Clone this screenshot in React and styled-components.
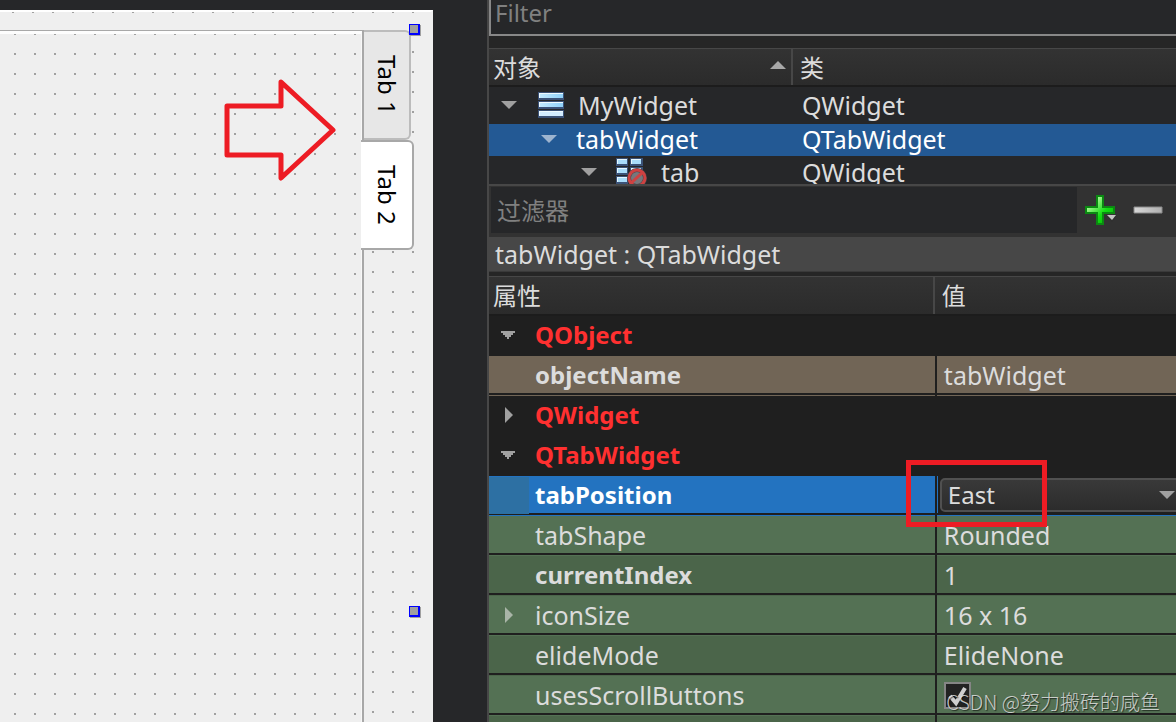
import { useState } from "react";
import styled, { createGlobalStyle } from "styled-components";

const GlobalStyle = createGlobalStyle`
  * {
    box-sizing: border-box;
  }

  body {
    margin: 0;
    background-color: #262729;
    color: #dcdcdc;
    font-family: "Noto Sans", "Noto Sans CJK SC", sans-serif;
    font-size: 24px;
    line-height: 32px;
  }

  button, input, select {
    font: inherit;
    color: inherit;
  }
`;

const Designer = styled.main`
  display: grid;
  grid-template-columns: minmax(0, 487fr) minmax(0, 689fr);
  height: 100vh;
  overflow: hidden;
`;

/* ---------- form editor ---------- */

const dots = (x, y) => `
  background-color: #efefef;
  background-image: conic-gradient(at 2px 2px, transparent 75%, #a0a0a0 0);
  background-size: 20px 20px;
  background-position: ${x}px ${y}px;
`;

const FormArea = styled.section`
  display: flex;
  padding: 10px 54px 0 0;
`;

const Form = styled.div`
  ${dots(12, 19)}
  background-clip: padding-box;
  position: relative;
  flex: 1;
  display: flex;
  padding-top: 18px;
  border-top: 2px solid #fff;
  border-right: 2px solid #efefef;
`;

const TabPage = styled.div`
  ${dots(14, 19)}
  flex: 1;
  border-top: 3px solid #fdfdfd;
  border-right: 1px solid #f8f8f8;
  box-shadow: 0 -1px 0 #a8a8a8;
  margin-top: 1px;
`;

const TabBar = styled.div`
  display: flex;
  flex-direction: column;
  align-items: flex-start;
  width: 51px;
  margin-right: 18px;
  border-left: 2px solid #a8a8a8;
`;

const Tab = styled.button`
  writing-mode: vertical-rl;
  width: ${(p) => (p.$current ? 53 : 47)}px;
  height: 110px;
  margin-left: ${(p) => (p.$current ? -3 : 0)}px;
  padding: 0;
  border: 2px solid ${(p) => (p.$current ? "#a8a8a8" : "#bcbcbc")};
  border-left: 0;
  border-radius: 0 6px 6px 0;
  background-color: ${(p) => (p.$current ? "#fff" : "#e7e7e7")};
  color: #000;
  text-align: center;
`;

const Handle = styled.span`
  position: absolute;
  top: ${(p) => p.$top};
  right: 11px;
  width: 11px;
  height: 11px;
  border: solid #0000ff;
  border-width: 1px 2px 2px 1px;
  background-color: #a0a0a0;
  box-shadow: 1px 1px 0 #a0a0a0;
`;

const ArrowMark = styled.svg`
  position: absolute;
  top: 66px;
  left: 222px;
  width: 116px;
  height: 104px;
`;

/* ---------- side panels ---------- */

const Side = styled.aside`
  display: flex;
  flex-direction: column;
  min-width: 0;
  overflow: hidden;
  border-left: 2px solid #474747;
  background-color: #262626;
`;

const ObjectFilter = styled.input`
  flex: none;
  width: 100%;
  height: 36px;
  padding: 0 4px 10px;
  border: solid #888;
  border-width: 0 0 2px 2px;
  background-color: #262729;
  outline: 0;

  &::placeholder {
    color: #808080;
  }
`;

const Grid = styled.table`
  width: 100%;
  table-layout: fixed;
  border-spacing: 0;
`;

const HeadCell = styled.th`
  height: 39px;
  padding: 2px 4px 0;
  border: solid #1c1c1c;
  border-width: 0 0 2px;
  background-image: linear-gradient(#333, #2b2b2b);
  box-shadow: inset 0 1px 0 #474747, inset -2px 0 0 ${(p) => (p.$last ? "transparent" : "#474747")};
  font-weight: 400;
  line-height: 32px;
  text-align: left;
`;

const HeadInner = styled.div`
  display: flex;
  justify-content: space-between;
  align-items: center;
  padding-right: 3px;
  padding-left: ${(p) => (p.$indent ? 3 : 0)}px;
`;

const TreeView = styled.div`
  flex: none;
  height: 136px;
  margin-top: 12px;
  overflow: hidden;
`;

const TreeRow = styled.tr`
  height: ${(p) => p.$height}px;
  background-color: ${(p) => (p.$selected ? "#235994" : "#262729")};
  color: ${(p) => (p.$selected ? "#fff" : "#dcdcdc")};
`;

const TreeCell = styled.td`
  padding: 0 0 2px ${(p) => p.$indent}px;
  font-size: 25px;
  line-height: 30px;
  white-space: nowrap;
`;

const TreeItem = styled.div`
  display: flex;
  align-items: center;
  height: 30px;

  svg {
    flex: none;
  }
`;

const Expander = styled.button`
  display: flex;
  flex: none;
  align-items: center;
  width: ${(p) => p.$width}px;
  height: 20px;
  padding: 0;
  border: 0;
  background: none;
  color: ${(p) => p.$color || "#a0a0a0"};
`;

const ItemName = styled.span`
  margin-left: ${(p) => (p.$icon ? 13 : 0)}px;
`;

const PropertyToolbar = styled.div`
  display: flex;
  flex: none;
  align-items: center;
  height: 53px;
  padding: 0 13px 3px 2px;
  border-top: 2px solid #474747;
  background-color: #323232;
`;

const PropertyFilter = styled.input`
  flex: 1;
  min-width: 0;
  height: 46px;
  margin-right: 8px;
  padding: 0 6px;
  border: 0;
  background-color: #262729;
  outline: 0;

  &::placeholder {
    color: #808080;
  }
`;

const ToolButton = styled.button`
  display: flex;
  padding: 0;
  border: 0;
  margin-right: ${(p) => p.$gap || 0}px;
  background: none;
`;

const ObjectTitle = styled.div`
  flex: none;
  height: 35px;
  margin-bottom: 4px;
  padding-left: 6px;
  border-bottom: 1px solid #3a3a3a;
  background-color: #474747;
  font-size: 25px;
  line-height: 35px;
`;

const tones = {
  group: "#1f1f1f",
  brown: "#716556",
  blue: "#2373c0",
  light: "#547154",
  dark: "#4b654a",
};

const PropertyTable = styled(Grid)`
  flex: none;

  th {
    height: 40px;
  }
`;

const PropertyRow = styled.tr`
  height: 40px;
  background-color: ${(p) => tones[p.$tone]};
`;

const PropertyCell = styled.td`
  position: relative;
  padding: 0 0 2px ${(p) => (p.$value ? 9 : 0)}px;
  box-shadow: ${(p) => (p.$value ? "inset 2px 0 0 #1f1f1f, " : "")}inset 0 -1px 0 ${(p) => tones[p.$tone]},
    inset 0 -3px 0 #1f1f1f;
  font-size: 25px;
  white-space: nowrap;
`;

const GroupCell = styled.td`
  padding: 0 0 2px;
`;

const PropertyName = styled.div`
  display: flex;
  align-items: center;
  height: 37px;
  padding-left: 11px;
  background-image: ${(p) => (p.$marked ? "linear-gradient(90deg, #2d70a3 40px, transparent 40px)" : "none")};
  color: ${(p) => (p.$group ? "#ff3030" : p.$marked ? "#fff" : "inherit")};
  font-size: ${(p) => (p.$bold ? 24 : 25)}px;
  font-weight: ${(p) => (p.$bold ? 700 : 400)};
`;

const EditorCell = styled(PropertyCell)`
  padding: 0 0 4px 3px;
  background-color: #1f1f1f;
  background-image: linear-gradient(90deg, transparent 2px, #2373c0 2px 3px, transparent 3px);
  font-size: 24px;
`;

const Combo = styled.div`
  display: flex;
  align-items: center;
  height: 34px;
  margin: 2px -6px 0 2px;
  border: 2px solid #505050;
  border-radius: 5px;
  background-image: linear-gradient(#393939, #2c2c2c);

  svg {
    flex: none;
    margin-right: 5px;
    color: #a0a0a0;
  }
`;

const ComboSelect = styled.select`
  flex: 1;
  height: 30px;
  padding: 0 6px;
  border: 0;
  appearance: none;
  background: none;
  line-height: 30px;
  outline: 0;
`;

const RedFrame = styled.span`
  position: absolute;
  z-index: 1;
  top: -16px;
  left: -29px;
  width: 141px;
  height: 67px;
  border: 5px solid #ed1c24;
  pointer-events: none;
`;

const CheckLabel = styled.label`
  display: grid;
  width: 27px;

  > * {
    grid-area: 1 / 1;
  }
`;

const CheckBox = styled.input`
  width: 27px;
  height: 27px;
  margin: 0;
  border: 2px solid #858585;
  appearance: none;
  background-color: #222;
`;

const Watermark = styled.div`
  position: absolute;
  right: 16px;
  bottom: 4px;
  color: rgba(225, 225, 225, 0.85);
  font-family: "Noto Sans CJK SC", sans-serif;
  font-size: 20px;
  font-weight: 300;
  text-shadow: 1px 1px 1px rgba(0, 0, 0, 0.6);
`;

function Triangle({ right, small }) {
  if (right) {
    return (
      <svg width="16" height="16" viewBox="0 0 16 16">
        <path d="M5 0l8 8-8 8z" fill="currentColor" />
      </svg>
    );
  }
  return (
    <svg width="16" height="16" viewBox="0 0 16 16">
      <path d={small ? "M1 4h14v2h-2v2h-2v2H9v2H7v-2H5V8H3V6H1z" : "M0 4h16l-8 8z"} fill="currentColor" />
    </svg>
  );
}

function SortArrow() {
  return (
    <svg width="16" height="16" viewBox="0 0 16 16">
      <path d="M0 9l8-8 8 8z" fill="#a8a8a8" />
    </svg>
  );
}

function LayoutIcon() {
  return (
    <svg width="27" height="27" viewBox="0 0 27 27">
      <defs>
        <linearGradient id="bar" x2="1" y2="0">
          <stop offset="0" stopColor="#c4ebff" />
          <stop offset="1" stopColor="#8fd0f8" />
        </linearGradient>
      </defs>
      {[1, 10, 19].map((y, i) => (
        <g key={y}>
          <path d={`M0 ${y}h26v8H0z`} fill="#3b5277" />
          <path d={`M1 ${y + 1}h24v5H1z`} fill={i === 2 ? "#d3ecff" : "url(#bar)"} />
          <path d={`M1 ${y + 1}h24v1H2v4H1z`} fill="#eefaff" />
        </g>
      ))}
    </svg>
  );
}

function BrokenLayoutIcon() {
  return (
    <svg width="32" height="32" viewBox="0 0 32 32">
      {[2, 11, 20].map((y) => (
        <g key={y}>
          <path d={`M0 ${y}h12v8H0zM14 ${y}h13v8H14z`} fill="#3b5277" />
          <path d={`M1 ${y + 1}h10v5H1zM15 ${y + 1}h10v5H15z`} fill="#a9dcfa" />
          <path d={`M1 ${y + 1}h10v1H2v4H1zM15 ${y + 1}h10v1H16v4h-1z`} fill="#e5f7ff" />
        </g>
      ))}
      <circle cx="21" cy="22" r="8" fill="#77777c" stroke="#4a4448" strokeWidth="4" />
      <circle cx="21" cy="22" r="8" fill="none" stroke="#cf4242" strokeWidth="3" />
      <path d="M15 27l12-11" stroke="#cf4242" strokeWidth="3" />
    </svg>
  );
}

function PlusIcon() {
  return (
    <svg width="32" height="32" viewBox="0 0 32 32">
      <defs>
        <linearGradient id="plus" x2="1" y2="1">
          <stop offset="0.2" stopColor="#b6f5a0" />
          <stop offset="0.6" stopColor="#12e012" />
          <stop offset="1" stopColor="#00a800" />
        </linearGradient>
      </defs>
      <path
        d="M12 2h6v11h11v6H18v11h-6V19H1v-6h11z"
        fill="url(#plus)"
        stroke="#0b8a12"
        strokeWidth="2"
      />
      <path d="M22 22h10l-5 6z" fill="#303030" />
      <path d="M22 21h9l-4 5z" fill="#c4c4c4" />
    </svg>
  );
}

function MinusIcon() {
  return (
    <svg width="30" height="8" viewBox="0 0 30 8">
      <defs>
        <linearGradient id="minus">
          <stop offset="0" stopColor="#d8d8d8" />
          <stop offset="1" stopColor="#b0b0b0" />
        </linearGradient>
      </defs>
      <path d="M1 1h28v6H1z" fill="url(#minus)" stroke="#8a8a8a" strokeWidth="1" />
    </svg>
  );
}

const objects = [
  { name: "MyWidget", type: "QWidget", indent: 12, gap: 37, height: 37, icon: <LayoutIcon /> },
  { name: "tabWidget", type: "QTabWidget", indent: 52, gap: 35, height: 32, selected: true },
  { name: "tab", type: "QWidget", indent: 92, gap: 35, height: 34, icon: <BrokenLayoutIcon /> },
];

const properties = [
  { name: "QObject", tone: "group", open: true },
  { name: "objectName", tone: "brown", bold: true, value: "tabWidget" },
  { name: "QWidget", tone: "group", open: false },
  { name: "QTabWidget", tone: "group", open: true },
  { name: "tabPosition", tone: "blue", bold: true, editor: "combo" },
  { name: "tabShape", tone: "light", value: "Rounded" },
  { name: "currentIndex", tone: "dark", bold: true, value: "1" },
  { name: "iconSize", tone: "light", open: false, value: "16 x 16" },
  { name: "elideMode", tone: "dark", value: "ElideNone" },
  { name: "usesScrollButtons", tone: "light", editor: "check" },
  { name: "", tone: "dark", value: "" },
];

function PropertyLabel({ item }) {
  const group = item.tone === "group";
  return (
    <PropertyName $group={group} $marked={item.tone === "blue"} $bold={group || item.bold}>
      <Expander
        as={item.open === undefined ? "span" : "button"}
        aria-label={item.open === undefined ? undefined : item.name}
        $width={35}
        $color={group ? "#a0a0a0" : "#a9b5a8"}
      >
        {item.open !== undefined && <Triangle right={!item.open} small={group} />}
      </Expander>
      {item.name}
    </PropertyName>
  );
}

function PropertyValue({ item }) {
  const [position, setPosition] = useState("East");
  const [checked, setChecked] = useState(true);

  if (item.editor === "combo") {
    return (
      <EditorCell $value $tone={item.tone}>
        <Combo>
          <ComboSelect
            aria-label="tabPosition"
            value={position}
            onChange={(e) => setPosition(e.target.value)}
          >
            <option>North</option>
            <option>South</option>
            <option>West</option>
            <option>East</option>
          </ComboSelect>
          <Triangle />
        </Combo>
        <RedFrame />
      </EditorCell>
    );
  }

  if (item.editor === "check") {
    return (
      <PropertyCell $value $tone={item.tone}>
        <CheckLabel>
          <CheckBox
            type="checkbox"
            aria-label="usesScrollButtons"
            checked={checked}
            onChange={(e) => setChecked(e.target.checked)}
          />
          {checked && (
            <svg width="27" height="27" viewBox="0 0 27 27">
              <path d="M6 14l6 7 9-15" fill="none" stroke="#cfcfcf" strokeWidth="4" />
            </svg>
          )}
        </CheckLabel>
      </PropertyCell>
    );
  }

  return (
    <PropertyCell $value $tone={item.tone}>
      {item.value}
    </PropertyCell>
  );
}

function FormEditor() {
  const [tab, setTab] = useState(1);
  return (
    <FormArea>
      <Form>
        <TabPage />
        <TabBar role="tablist" aria-orientation="vertical">
          {["Tab 1", "Tab 2"].map((label, i) => (
            <Tab
              key={label}
              role="tab"
              aria-selected={tab === i}
              $current={tab === i}
              onClick={() => setTab(i)}
            >
              {label}
            </Tab>
          ))}
        </TabBar>
        <Handle $top="12px" />
        <Handle $top="594px" />
        <ArrowMark viewBox="0 0 116 104">
          <path
            d="M5 28h54V4l52 48-52 48V77H5z"
            fill="none"
            stroke="#ed1c24"
            strokeWidth="5"
            strokeLinejoin="round"
          />
        </ArrowMark>
      </Form>
    </FormArea>
  );
}

function ObjectInspector() {
  return (
    <>
      <ObjectFilter placeholder="Filter" aria-label="Filter" />
      <TreeView>
        <Grid>
          <colgroup>
            <col style={{ width: "44.25%" }} />
            <col />
          </colgroup>
          <thead>
            <tr>
              <HeadCell>
                <HeadInner>
                  对象
                  <SortArrow />
                </HeadInner>
              </HeadCell>
              <HeadCell $last>
                <HeadInner $indent>类</HeadInner>
              </HeadCell>
            </tr>
          </thead>
          <tbody>
            {objects.map((item) => (
              <TreeRow key={item.name} $height={item.height} $selected={item.selected}>
                <TreeCell $indent={item.indent}>
                  <TreeItem>
                    <Expander
                      aria-label={item.name}
                      $width={item.gap}
                      $color={item.selected ? "#9db4cf" : "#a0a0a0"}
                    >
                      <Triangle />
                    </Expander>
                    {item.icon}
                    <ItemName $icon={!!item.icon}>{item.name}</ItemName>
                  </TreeItem>
                </TreeCell>
                <TreeCell $indent={9}>{item.type}</TreeCell>
              </TreeRow>
            ))}
          </tbody>
        </Grid>
      </TreeView>
    </>
  );
}

function PropertyEditor() {
  return (
    <>
      <PropertyToolbar>
        <PropertyFilter placeholder="过滤器" aria-label="过滤器" />
        <ToolButton aria-label="+" $gap={16}>
          <PlusIcon />
        </ToolButton>
        <ToolButton aria-label="-">
          <MinusIcon />
        </ToolButton>
      </PropertyToolbar>
      <ObjectTitle>tabWidget : QTabWidget</ObjectTitle>
      <PropertyTable>
        <colgroup>
          <col style={{ width: "64.9%" }} />
          <col />
        </colgroup>
        <thead>
          <tr>
            <HeadCell>属性</HeadCell>
            <HeadCell $last>
              <HeadInner $indent>值</HeadInner>
            </HeadCell>
          </tr>
        </thead>
        <tbody>
          {properties.map((item) => (
            <PropertyRow key={item.name} $tone={item.tone}>
              {item.tone === "group" ? (
                <GroupCell colSpan={2}>
                  <PropertyLabel item={item} />
                </GroupCell>
              ) : (
                <>
                  <PropertyCell $tone={item.tone}>
                    <PropertyLabel item={item} />
                  </PropertyCell>
                  <PropertyValue item={item} />
                </>
              )}
            </PropertyRow>
          ))}
        </tbody>
      </PropertyTable>
    </>
  );
}

export default function App() {
  return (
    <>
      <GlobalStyle />
      <Designer>
        <FormEditor />
        <Side>
          <ObjectInspector />
          <PropertyEditor />
        </Side>
      </Designer>
      <Watermark>CSDN @努力搬砖的咸鱼</Watermark>
    </>
  );
}
